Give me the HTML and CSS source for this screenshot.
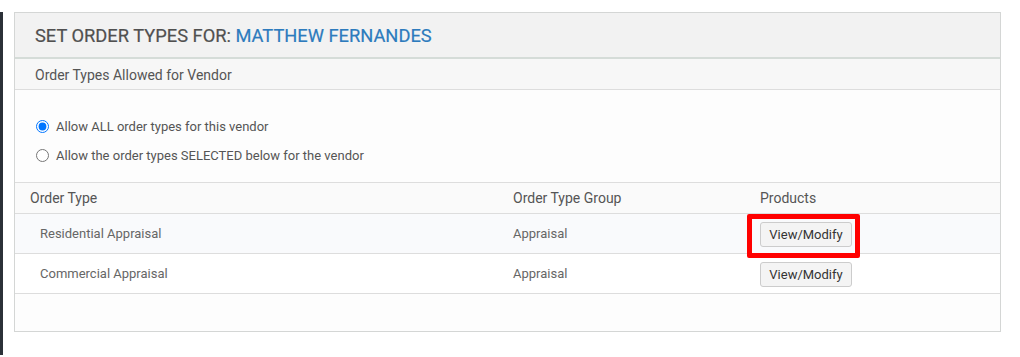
FILE: index.html
```html
<!DOCTYPE html>
<html>
<head>
<meta charset="utf-8">
<link rel="stylesheet" href="styles.css">
</head>
<body>
<div class="page">
  <div class="strip"></div>
  <div class="content">
    <div class="panel">
      <div class="panel-head">
        <h2 class="title">SET ORDER TYPES FOR: <span class="name">MATTHEW FERNANDES</span></h2>
      </div>
      <div class="panel-sub">Order Types Allowed for Vendor</div>
      <div class="panel-body">
        <div class="options">
          <label class="opt"><input type="radio" name="allow" checked><span>Allow ALL order types for this vendor</span></label>
          <label class="opt"><input type="radio" name="allow"><span>Allow the order types SELECTED below for the vendor</span></label>
        </div>
        <div class="table">
          <div class="row head">
            <div class="cell c1">Order Type</div>
            <div class="cell c2">Order Type Group</div>
            <div class="cell c3">Products</div>
          </div>
          <div class="row alt">
            <div class="cell c1 indent">Residential Appraisal</div>
            <div class="cell c2">Appraisal</div>
            <div class="cell c3"><span class="btn-wrap"><button class="btn">View/Modify</button><span class="highlight"></span></span></div>
          </div>
          <div class="row">
            <div class="cell c1 indent">Commercial Appraisal</div>
            <div class="cell c2">Appraisal</div>
            <div class="cell c3"><button class="btn">View/Modify</button></div>
          </div>
        </div>
        <div class="spacer"></div>
      </div>
    </div>
  </div>
</div>
</body>
</html>
```
FILE: styles.css
```css
html, body {
  margin: 0;
  padding: 0;
  background: #ffffff;
  font-family: Roboto, "Liberation Sans", Arial, sans-serif;
}
.page {
  display: flex;
  width: 1020px;
  height: 357px;
}
.strip {
  width: 3px;
  margin-top: 12px;
  height: 343px;
  background: #2b3138;
  flex: none;
}
.content {
  padding: 12px 0 0 11px;
  flex: none;
}
.panel {
  width: 985px;
  border: 1px solid #d4d6d5;
  background: #fdfdfd;
}
.panel-head {
  height: 44px;
  background: #f2f2f2;
  border-bottom: 2px solid #d5dcd8;
  display: flex;
  align-items: center;
  padding-left: 20px;
}
.title {
  margin: 0;
  font-size: 18.3px;
  font-weight: 400;
  color: #505050;
  -webkit-text-stroke: 0.2px #505050;
}
.name {
  color: #2d7bbd;
  -webkit-text-stroke: 0.2px #2d7bbd;
}
.panel-sub {
  background: #f7f7f7;
  border-bottom: 1px solid #dddddd;
  display: flex;
  align-items: center;
  padding-left: 20px;
  font-size: 14px;
  color: #555555;
  padding-top: 1px;
  box-sizing: border-box;
  height: 31px;
}
.options {
  padding: 27px 0 17px 19px;
  display: flex;
  flex-direction: column;
  gap: 10px;
}
.opt {
  display: flex;
  align-items: center;
  font-size: 13px;
  color: #555555;
  height: 19px;
}
.opt input {
  margin: 0 7px 0 2px;
  width: 13px;
  height: 13px;
}
.table {
  border-top: 1px solid #dddddd;
}
.row {
  display: grid;
  grid-template-columns: 483px 247px 1fr;
  height: 39px;
  border-bottom: 1px solid #dddddd;
  align-items: center;
  background: #ffffff;
  font-size: 13px;
  color: #666666;
}
.row.head {
  height: 30px;
  background: #fafafa;
  font-size: 14px;
  color: #555555;
}
.row.alt {
  background: #f9fafc;
}
.cell {
  padding-left: 15px;
}
.cell.indent {
  padding-left: 25px;
}
.btn-wrap {
  position: relative;
  display: inline-block;
}
.btn {
  font-family: Roboto, "Liberation Sans", Arial, sans-serif;
  font-size: 13px;
  color: #333333;
  background: #f4f4f4;
  border: 1px solid #cccccc;
  border-radius: 3px;
  height: 25px;
  width: 92px;
  padding: 0;
  margin-top: 1px;
  vertical-align: middle;
}
.highlight {
  position: absolute;
  left: -13px;
  top: -7px;
  width: 103px;
  height: 34px;
  border: 5px solid #ff0000;
  border-radius: 2px;
}
.spacer {
  height: 37px;
  background: #fdfdfd;
}
```
